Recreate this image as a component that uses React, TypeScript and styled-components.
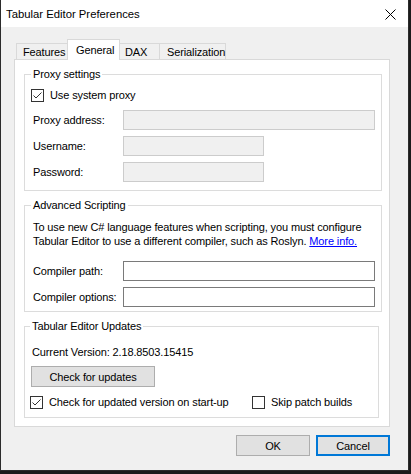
import styled, { createGlobalStyle } from "styled-components";

const GlobalStyle = createGlobalStyle`
  *, *::before, *::after { box-sizing: border-box; }
  html, body { margin: 0; padding: 0; background: #1b1b1b; }
  body {
    font-family: "Liberation Sans", Arial, sans-serif;
    font-size: 11px;
    letter-spacing: -0.12px;
    color: #000;
  }
`;

const Check = ({ checked }: { checked?: boolean }) => (
  <Box>
    {checked && (
      <svg width="11" height="11" viewBox="0 0 11 11">
        <polyline points="1.5,5.5 4,8 9.5,2.5" fill="none" stroke="#333" strokeWidth="1" />
      </svg>
    )}
  </Box>
);

const App = () => {
  return (
    <>
      <GlobalStyle />
      <Window>
        <TitleBar>
          <Title>Tabular Editor Preferences</Title>
          <svg width="11" height="11" viewBox="0 0 11 11">
            <path d="M0.5 0.5 L10.5 10.5 M10.5 0.5 L0.5 10.5" stroke="#000" strokeWidth="1" />
          </svg>
        </TitleBar>
        <Body>
          <TabStrip>
            <Tab $w={52} $pl={6}>Features</Tab>
            <Tab $w={53} $pl={8} $active>General</Tab>
            <Tab $w={41} $pl={5}>DAX</Tab>
            <Tab $w={67} $pl={7}>Serialization</Tab>
          </TabStrip>
          <Page>
            <Group $pb={8}>
              <Legend>Proxy settings</Legend>
              <CheckRow>
                <Check checked />
                Use system proxy
              </CheckRow>
              <Fields $mt={7}>
                <FieldRow>
                  <FieldLabel>Proxy address:</FieldLabel>
                  <TextBox $w={252} $disabled disabled />
                </FieldRow>
                <FieldRow>
                  <FieldLabel>Username:</FieldLabel>
                  <TextBox $w={141} $disabled disabled />
                </FieldRow>
                <FieldRow>
                  <FieldLabel>Password:</FieldLabel>
                  <TextBox $w={141} $disabled disabled />
                </FieldRow>
              </Fields>
            </Group>

            <Group $pb={4}>
              <Legend>Advanced Scripting</Legend>
              <Note>
                To use new C# language features when scripting, you must configure
                <br />
                Tabular Editor to use a different compiler, such as Roslyn. <Link>More info.</Link>
              </Note>
              <Fields $mt={13}>
                <FieldRow>
                  <FieldLabel>Compiler path:</FieldLabel>
                  <TextBox $w={252} />
                </FieldRow>
                <FieldRow>
                  <FieldLabel>Compiler options:</FieldLabel>
                  <TextBox $w={252} />
                </FieldRow>
              </Fields>
            </Group>

            <Group $pb={7} $pl={7} $mr={3}>
              <Legend>Tabular Editor Updates</Legend>
              <Version>Current Version: 2.18.8503.15415</Version>
              <PushButton>Check for updates</PushButton>
              <CheckLine>
                <CheckRow $w={224}>
                  <Check checked />
                  Check for updated version on start-up
                </CheckRow>
                <CheckRow>
                  <Check />
                  Skip patch builds
                </CheckRow>
              </CheckLine>
            </Group>
          </Page>
          <Footer>
            <DialogButton>OK</DialogButton>
            <DialogButton $default>Cancel</DialogButton>
          </Footer>
        </Body>
      </Window>
    </>
  );
};

const Window = styled.div`
  width: 409px;
  height: 471px;
  border: 1px solid #2b2b2b;
  border-top: none;
  background: #f0f0f0;
  display: flex;
  flex-direction: column;
`;

const TitleBar = styled.div`
  height: 27px;
  background: #fff;
  display: flex;
  align-items: center;
  justify-content: space-between;
  padding: 1px 12px 0 5px;
`;

const Title = styled.span`
  font-size: 11.3px;
  letter-spacing: 0;
`;

const Body = styled.div`
  flex: 1;
  display: flex;
  flex-direction: column;
  padding: 12px 18px 14px 13px;
`;

const TabStrip = styled.div`
  height: 20px;
  display: flex;
  align-items: flex-end;
  padding-left: 2px;
`;

const Tab = styled.div<{ $w: number; $pl: number; $active?: boolean }>`
  position: relative;
  z-index: ${(p) => (p.$active ? 1 : 0)};
  width: ${(p) => p.$w}px;
  height: ${(p) => (p.$active ? 21 : 16)}px;
  margin-bottom: ${(p) => (p.$active ? -1 : 0)}px;
  padding-left: ${(p) => p.$pl}px;
  display: flex;
  align-items: center;
  border: 1px solid #d9d9d9;
  border-bottom: none;
  background: ${(p) => (p.$active ? "#fff" : "#f0f0f0")};
  white-space: nowrap;
  & + & {
    margin-left: -1px;
  }
`;

const Page = styled.div`
  height: 368px;
  border: 1px solid #d9d9d9;
  background: #fff;
  padding: 7px 7px 0 9px;
  display: flex;
  flex-direction: column;
  gap: 7px;
`;

const Group = styled.fieldset<{ $pb: number; $pl?: number; $mr?: number }>`
  margin: 0 ${(p) => p.$mr ?? 0}px 0 0;
  min-width: 0;
  border: 1px solid #dcdcdc;
  padding: 6px 6px ${(p) => p.$pb}px ${(p) => p.$pl ?? 8}px;
`;

const Legend = styled.legend`
  padding: 0 2px;
  margin-left: -2px;
  line-height: 14px;
`;

const CheckRow = styled.label<{ $w?: number }>`
  display: flex;
  align-items: center;
  gap: 6px;
  height: 16px;
  margin-left: -2px;
  white-space: nowrap;
  ${(p) => (p.$w ? `width: ${p.$w}px;` : "")}
`;

const Box = styled.span`
  width: 13px;
  height: 13px;
  border: 1px solid #333;
  background: #fff;
  display: flex;
  flex-shrink: 0;
`;

const Fields = styled.div<{ $mt: number }>`
  margin-top: ${(p) => p.$mt}px;
  display: flex;
  flex-direction: column;
  gap: 6px;
`;

const FieldRow = styled.div`
  display: flex;
  align-items: center;
  height: 20px;
`;

const FieldLabel = styled.span`
  width: 90px;
  flex-shrink: 0;
`;

const TextBox = styled.input<{ $w: number; $disabled?: boolean }>`
  width: ${(p) => p.$w}px;
  height: 20px;
  margin: 0;
  padding: 0 3px;
  border: 1px solid ${(p) => (p.$disabled ? "#cccccc" : "#7a7a7a")};
  background: ${(p) => (p.$disabled ? "#f0f0f0" : "#fff")};
  font: inherit;
  outline: none;
`;

const Note = styled.p`
  margin: 2px 0 0;
  line-height: 14px;
  white-space: nowrap;
`;

const Link = styled.span`
  color: #0000ff;
  text-decoration: underline;
`;

const Version = styled.div`
  margin: 6px 0 0;
  line-height: 14px;
`;

const PushButton = styled.button`
  display: block;
  width: 124px;
  height: 21px;
  margin: 7px 0 0 -1px;
  padding: 0;
  border: 1px solid #adadad;
  background: #e1e1e1;
  font: inherit;
  letter-spacing: inherit;
  color: #000;
`;

const CheckLine = styled.div`
  display: flex;
  margin-top: 7px;
`;

const Footer = styled.div`
  margin-top: 8px;
  display: flex;
  justify-content: flex-end;
  gap: 6px;
`;

const DialogButton = styled.button<{ $default?: boolean }>`
  width: 74px;
  height: 21px;
  margin: 0;
  padding: 0;
  border: ${(p) => (p.$default ? "2px solid #0078d7" : "1px solid #adadad")};
  background: #e1e1e1;
  font: inherit;
  letter-spacing: inherit;
  color: #000;
`;

export default App;
